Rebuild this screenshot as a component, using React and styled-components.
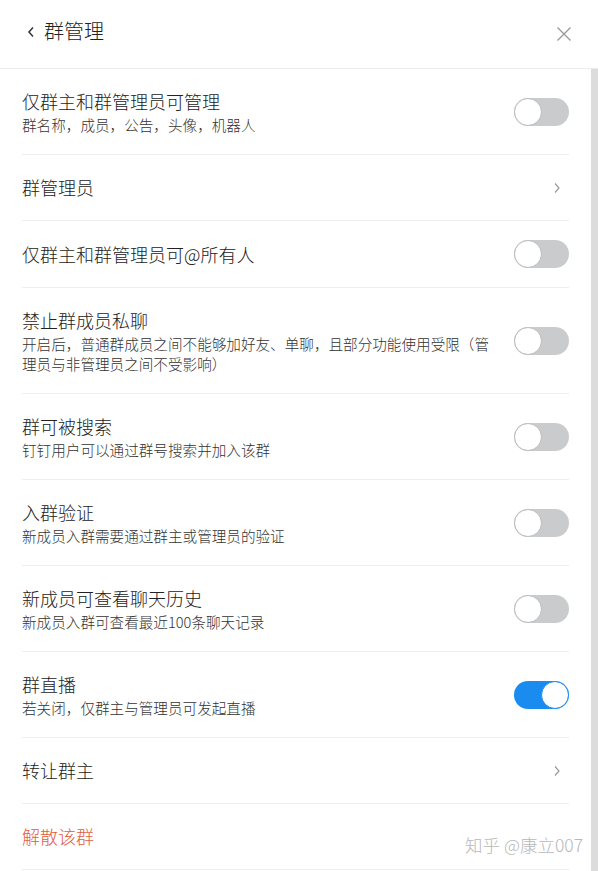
import React, { useState } from "react";
import styled, { createGlobalStyle } from "styled-components";

const GlobalStyle = createGlobalStyle`
	* {
		box-sizing: border-box;
	}
	body {
		margin: 0;
		background: #fff;
		font-family: "Noto Sans CJK SC", "Noto Sans", sans-serif;
		color: #333;
	}
`;

const settings = [
	{ title: "仅群主和群管理员可管理", desc: "群名称，成员，公告，头像，机器人", type: "toggle", on: false },
	{ title: "群管理员", type: "link" },
	{ title: "仅群主和群管理员可@所有人", type: "toggle", on: false },
	{
		title: "禁止群成员私聊",
		desc: "开启后，普通群成员之间不能够加好友、单聊，且部分功能使用受限（管理员与非管理员之间不受影响）",
		type: "toggle",
		on: false,
	},
	{ title: "群可被搜索", desc: "钉钉用户可以通过群号搜索并加入该群", type: "toggle", on: false },
	{ title: "入群验证", desc: "新成员入群需要通过群主或管理员的验证", type: "toggle", on: false },
	{ title: "新成员可查看聊天历史", desc: "新成员入群可查看最近100条聊天记录", type: "toggle", on: false },
	{ title: "群直播", desc: "若关闭，仅群主与管理员可发起直播", type: "toggle", on: true },
	{ title: "转让群主", type: "link" },
	{ title: "解散该群", type: "danger" },
];

const Toggle = ({ defaultOn }) => {
	const [on, setOn] = useState(defaultOn);
	return (
		<Switch $on={on} onClick={() => setOn(!on)}>
			<Knob $on={on} />
		</Switch>
	);
};

const App = () => {
	return (
		<Page>
			<GlobalStyle />
			<Header>
				<BackButton>
					<svg width="8" height="12" viewBox="0 0 8 12">
						<path d="M6 1.5L2 6l4 4.5" fill="none" stroke="#333" strokeWidth="1.5" />
					</svg>
					<HeaderTitle>群管理</HeaderTitle>
				</BackButton>
				<CloseButton>
					<svg width="16" height="16" viewBox="0 0 16 16">
						<path d="M1.5 1.5l13 13M14.5 1.5l-13 13" stroke="#9a9a9a" strokeWidth="1.4" />
					</svg>
				</CloseButton>
			</Header>
			<Body>
				<List>
					{settings.map((item) => (
						<Row key={item.title}>
							<Texts>
								<Title $danger={item.type === "danger"}>{item.title}</Title>
								{item.desc && <Desc>{item.desc}</Desc>}
							</Texts>
							{item.type === "toggle" && <Toggle defaultOn={item.on} />}
							{item.type === "link" && (
								<Arrow>
									<svg width="8" height="12" viewBox="0 0 8 12">
										<path d="M2 1.5L6 6l-4 4.5" fill="none" stroke="#9a9a9a" strokeWidth="1.2" />
									</svg>
								</Arrow>
							)}
						</Row>
					))}
				</List>
				<ScrollTrack />
				<Watermark>知乎 @康立007</Watermark>
			</Body>
		</Page>
	);
};

export default App;

const Page = styled.div`
	width: 598px;
	height: 871px;
	overflow: hidden;
	display: flex;
	flex-direction: column;
`;

const Header = styled.div`
	height: 69px;
	flex-shrink: 0;
	display: flex;
	align-items: center;
	justify-content: space-between;
	padding: 0 26px 6px 27px;
	border-bottom: 1px solid #ececec;
`;

const BackButton = styled.div`
	display: flex;
	align-items: center;
	gap: 9px;
	cursor: pointer;
	svg {
		margin-top: 1px;
	}
`;

const HeaderTitle = styled.div`
	font-size: 20px;
	line-height: 28px;
	font-weight: 300;
	color: #222;
`;

const CloseButton = styled.div`
	display: flex;
	margin-top: 6px;
	cursor: pointer;
`;

const Body = styled.div`
	flex: 1;
	display: flex;
	position: relative;
`;

const List = styled.div`
	flex: 1;
	padding: 0 22px;
`;

const ScrollTrack = styled.div`
	width: 7px;
	background: #dcdcdc;
`;

const Row = styled.div`
	display: flex;
	align-items: center;
	gap: 12px;
	padding: 19px 0;
	border-bottom: 1px solid #eeeeee;
`;

const Texts = styled.div`
	flex: 1;
	min-width: 0;
`;

const Title = styled.div`
	font-size: 18px;
	line-height: 27px;
	font-weight: 300;
	color: ${(p) => (p.$danger ? "#e25c3d" : "#222")};
`;

const Desc = styled.div`
	font-size: 14.6px;
	line-height: 20px;
	font-weight: 300;
	color: #333;
`;

const Switch = styled.div`
	flex-shrink: 0;
	width: 55px;
	height: 28px;
	border-radius: 14px;
	background: ${(p) => (p.$on ? "#1a8cf0" : "#c9cbcd")};
	display: flex;
	justify-content: ${(p) => (p.$on ? "flex-end" : "flex-start")};
	cursor: pointer;
`;

const Knob = styled.div`
	width: 28px;
	height: 28px;
	border-radius: 50%;
	background: #fff;
	border: 1px solid ${(p) => (p.$on ? "#1a8cf0" : "#b9bbbd")};
`;

const Arrow = styled.div`
	display: flex;
	margin-right: 8px;
`;

const Watermark = styled.div`
	position: absolute;
	right: 15px;
	bottom: 14px;
	font-size: 17.5px;
	font-weight: 300;
	color: #b8b8b8;
	text-shadow: 0 0 1px #fff;
	pointer-events: none;
`;
